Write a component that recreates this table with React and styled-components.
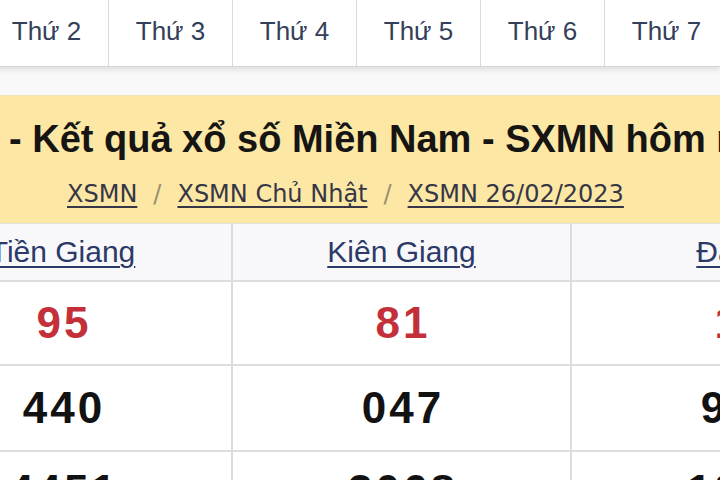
import React from 'react';
import styled, { createGlobalStyle } from 'styled-components';

const Global = createGlobalStyle`
  html, body { margin: 0; padding: 0; background: #f8f8f8; overflow: hidden; }
  body { width: 720px; height: 480px; font-family: "Liberation Sans", Arial, sans-serif; }
  *, *::before, *::after { box-sizing: border-box; }
`;

const Page = styled.div`
  width: 720px;
  height: 480px;
  overflow: hidden;
  display: flex;
  flex-direction: column;
  background: #f9f9f9;
`;

const TabBar = styled.nav`
  display: flex;
  flex-shrink: 0;
  height: 67px;
  margin-left: -15px;
  background: #fff;
  border-bottom: 1px solid #d4d4d4;
  box-shadow: 0 3px 5px rgba(0, 0, 0, 0.1);
  position: relative;
  z-index: 1;
`;

const Tab = styled.a`
  flex: 0 0 124px;
  border-right: 1px solid #dcdcdc;
  text-align: center;
  line-height: 62px;
  padding-bottom: 4px;
  font-size: 26px;
  color: #34405a;
  text-decoration: none;
`;

const Banner = styled.header`
  flex-shrink: 0;
  margin-top: 28px;
  background: #fce8a4;
  border-top: 1px solid #efe2b8;
  padding: 21px 0 15px;
  display: flex;
  flex-direction: column;
  gap: 19px;
`;

const Title = styled.h1`
  margin: 0;
  padding-left: 9px;
  font-size: 38px;
  line-height: 44px;
  font-weight: 700;
  color: #161514;
  white-space: nowrap;
`;

const Crumbs = styled.div`
  display: flex;
  align-items: baseline;
  padding-left: 67px;
  font-family: "DejaVu Sans", Verdana, sans-serif;
  font-size: 24px;
  line-height: 28px;
  white-space: nowrap;
`;

const Crumb = styled.a`
  color: #363646;
  text-decoration: underline;
  text-decoration-thickness: 2px;
  text-underline-offset: 4px;
`;

const Sep = styled.span`
  color: #9a8f6e;
  margin: 0 16px;
`;

const Table = styled.div`
  display: flex;
  flex-direction: column;
  margin-left: -106px;
  border-top: 1px solid #e2e2e2;
  background: #fff;
`;

const Row = styled.div`
  display: grid;
  flex-shrink: 0;
  grid-template-columns: repeat(3, 339px);
  height: ${p => p.$h}px;
  border-bottom: 2px solid #dedede;
  background: ${p => (p.$head ? '#f8f8fa' : '#fff')};
`;

const Cell = styled.div`
  display: flex;
  align-items: center;
  justify-content: center;
  border-right: 2px solid #dcdcdc;
`;

const Province = styled.a`
  font-size: 30px;
  color: #2b3a68;
  text-decoration: underline;
  text-decoration-thickness: 2px;
  text-underline-offset: 4px;
`;

const Num = styled.span`
  font-size: 44px;
  font-weight: 700;
  letter-spacing: 3px;
  padding-left: 3px;
  color: ${p => (p.$red ? '#c4303a' : '#121212')};
`;

const days = ['Thứ 2', 'Thứ 3', 'Thứ 4', 'Thứ 5', 'Thứ 6', 'Thứ 7'];
const provinces = ['Tiền Giang', 'Kiên Giang', 'Đà Lạt'];
const rows = [
  { h: 84, red: true, vals: ['95', '81', '17'] },
  { h: 86, vals: ['440', '047', '924'] },
  { h: 80, vals: ['4451', '3068', '1825'] },
];

export default function App() {
  return (
    <Page>
      <Global />
      <TabBar>
        {days.map(d => (
          <Tab key={d} href="#">{d}</Tab>
        ))}
      </TabBar>
      <Banner>
        <Title>- Kết quả xổ số Miền Nam - SXMN hôm nay</Title>
        <Crumbs>
          <Crumb href="#">XSMN</Crumb>
          <Sep>/</Sep>
          <Crumb href="#">XSMN Chủ Nhật</Crumb>
          <Sep>/</Sep>
          <Crumb href="#">XSMN 26/02/2023</Crumb>
        </Crumbs>
      </Banner>
      <Table>
        <Row $head $h={58}>
          {provinces.map(p => (
            <Cell key={p}><Province href="#">{p}</Province></Cell>
          ))}
        </Row>
        {rows.map((r, i) => (
          <Row key={i} $h={r.h}>
            {r.vals.map((v, j) => (
              <Cell key={j}><Num $red={r.red}>{v}</Num></Cell>
            ))}
          </Row>
        ))}
      </Table>
    </Page>
  );
}
